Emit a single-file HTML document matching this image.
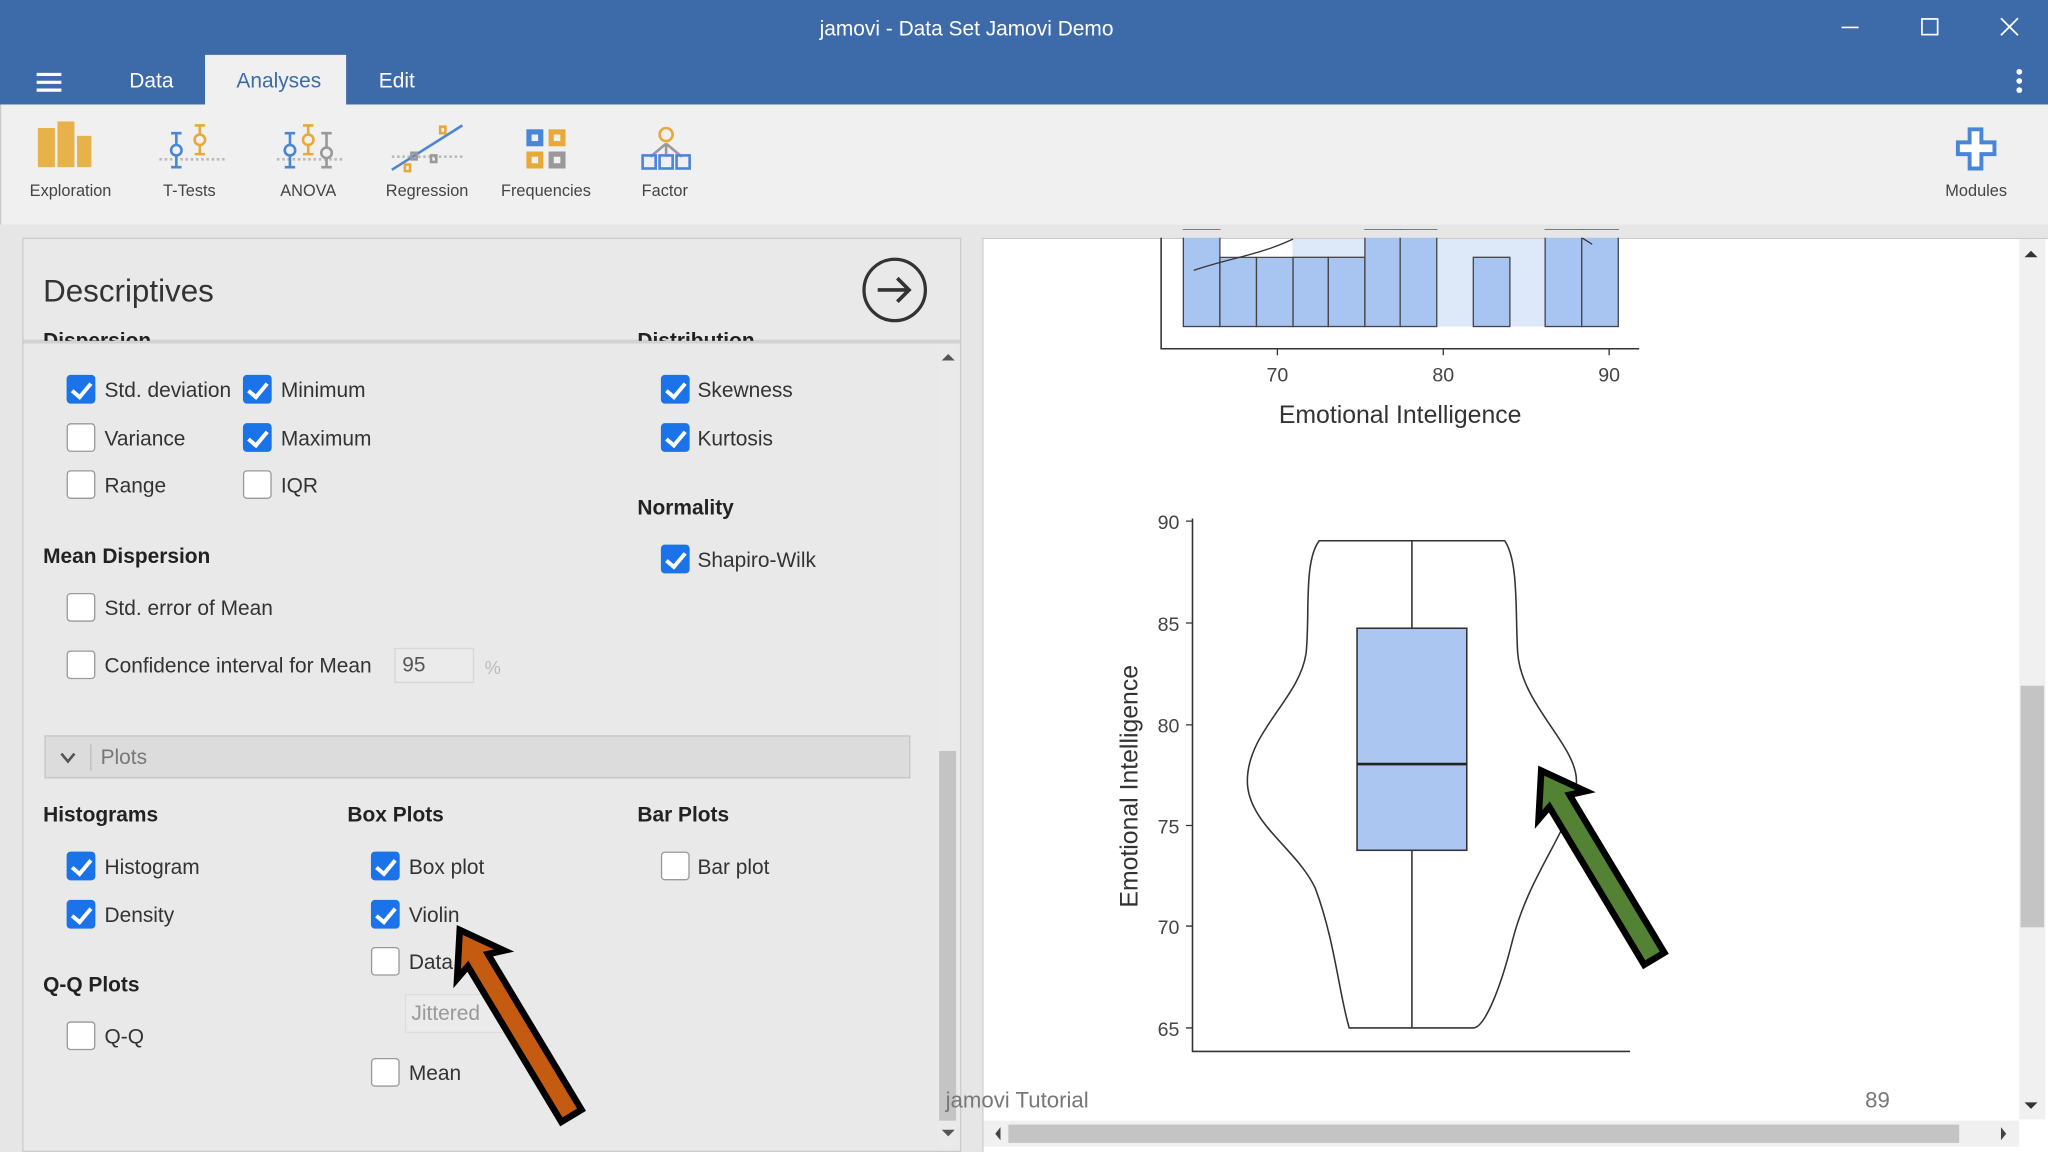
<!DOCTYPE html>
<html><head><meta charset="utf-8"><style>
*{margin:0;padding:0;box-sizing:border-box}
html,body{width:2048px;height:1152px;overflow:hidden;background:#e6e6e6}
#w{position:absolute;left:0;top:0;width:1568px;height:882px;transform:scale(1.306122);transform-origin:0 0;font-family:"Liberation Sans",sans-serif;color:#333}
.a{position:absolute}
.t{position:absolute;font-size:16px;color:#333;white-space:nowrap;line-height:1}
.h{position:absolute;font-size:16px;font-weight:bold;color:#222;white-space:nowrap;line-height:1}
.cb{position:absolute;width:22px;height:22px;border:1px solid #999;border-radius:3px;background:#fff}
.cb.on{background:#1a73e8;border-color:#1a73e8}
.cb.on::after{content:"";position:absolute;left:6px;top:2px;width:6px;height:12px;border:solid #fff;border-width:0 3px 3px 0;transform:rotate(40deg)}
.lbl{position:absolute;font-size:12.5px;color:#444;text-align:center;width:80px}
</style></head><body><div id="w">
<div class="a" style="left:0;top:0;width:1568px;height:80px;background:#3d6aa8"></div>
<div class="t" style="left:0;width:1480px;top:15px;text-align:center;color:#fff;font-size:16px">jamovi - Data Set Jamovi Demo</div>
<svg class="a" style="left:1400px;top:8px" width="160" height="28"><path d="M10 13h13" stroke="#fff" stroke-width="1.3"/><rect x="71.5" y="6.5" width="12" height="12" fill="none" stroke="#fff" stroke-width="1.3"/><path d="M132 6l13 13M145 6l-13 13" stroke="#fff" stroke-width="1.4"/></svg>
<svg class="a" style="left:28px;top:55px" width="20" height="16"><path d="M0 2h19M0 8h19M0 14h19" stroke="#fff" stroke-width="2.4"/></svg>
<div class="t" style="left:99px;top:55px;color:#fff">Data</div>
<div class="a" style="left:157px;top:42px;width:108px;height:40px;background:#f0f0f0"></div>
<div class="t" style="left:181px;top:55px;color:#3d6aa8">Analyses</div>
<div class="t" style="left:290px;top:55px;color:#fff">Edit</div>
<svg class="a" style="left:1542px;top:52px" width="8" height="20"><circle cx="4" cy="3" r="2.2" fill="#fff"/><circle cx="4" cy="10" r="2.2" fill="#fff"/><circle cx="4" cy="17" r="2.2" fill="#fff"/></svg>
<div class="a" style="left:0;top:80px;width:1568px;height:92px;background:#f0f0f0;border-left:1px solid #ccc"></div>
<svg class="a" style="left:0;top:88px" width="560" height="50">
<g fill="#e8b24a"><rect x="29" y="10" width="13" height="30"/><rect x="44" y="5" width="13" height="35"/><rect x="59" y="16" width="11" height="24"/></g>
<g stroke-width="2" fill="none"><path d="M122 34h50" stroke="#bbb" stroke-dasharray="2 2"/><path d="M135 14v26M131 14h8M131 40h8" stroke="#4a86d6"/><circle cx="135" cy="27" r="4" fill="#f0f0f0" stroke="#4a86d6"/><path d="M153 8v22M149 8h8M149 30h8" stroke="#e8a93a"/><circle cx="153" cy="19" r="4" fill="#f0f0f0" stroke="#e8a93a"/></g>
<g stroke-width="2" fill="none"><path d="M212 34h50" stroke="#bbb" stroke-dasharray="2 2"/><path d="M222 14v26M218 14h8M218 40h8" stroke="#4a86d6"/><circle cx="222" cy="27" r="4" fill="#f0f0f0" stroke="#4a86d6"/><path d="M236 8v22M232 8h8M232 30h8" stroke="#e8a93a"/><circle cx="236" cy="19" r="4" fill="#f0f0f0" stroke="#e8a93a"/><path d="M250 14v26M246 14h8M246 40h8" stroke="#999"/><circle cx="250" cy="29" r="4" fill="#f0f0f0" stroke="#999"/></g>
<g fill="none" stroke-width="2"><path d="M300 32h55" stroke="#bbb" stroke-dasharray="2 2"/><path d="M300 42L354 8" stroke="#4a86d6"/><rect x="315" y="29" width="4" height="5" stroke="#999"/><rect x="330" y="31" width="4" height="5" stroke="#999"/><rect x="337" y="9" width="4" height="5" stroke="#e8a93a"/><rect x="310" y="38" width="4" height="5" stroke="#e8a93a"/></g>
<g><rect x="403" y="11" width="13" height="13" fill="#4a86d6"/><rect x="420" y="11" width="13" height="13" fill="#e8a93a"/><rect x="403" y="28" width="13" height="13" fill="#e8a93a"/><rect x="420" y="28" width="13" height="13" fill="#999"/><rect x="407" y="15" width="5" height="5" fill="#f0f0f0"/><rect x="424" y="15" width="5" height="5" fill="#f0f0f0"/><rect x="407" y="32" width="5" height="5" fill="#f0f0f0"/><rect x="424" y="32" width="5" height="5" fill="#f0f0f0"/></g>
<g fill="none" stroke-width="2"><path d="M510 22L498 32M510 22v10M510 22l12 10" stroke="#999"/><circle cx="510" cy="15" r="5" stroke="#e8a93a" fill="#f0f0f0"/><rect x="492" y="31" width="10" height="10" stroke="#4a86d6"/><rect x="505" y="31" width="10" height="10" stroke="#4a86d6"/><rect x="518" y="31" width="10" height="10" stroke="#4a86d6"/></g>
</svg>
<div class="lbl" style="left:14px;top:139px">Exploration</div>
<div class="lbl" style="left:105px;top:139px">T-Tests</div>
<div class="lbl" style="left:196px;top:139px">ANOVA</div>
<div class="lbl" style="left:287px;top:139px">Regression</div>
<div class="lbl" style="left:378px;top:139px">Frequencies</div>
<div class="lbl" style="left:469px;top:139px">Factor</div>
<svg class="a" style="left:1497px;top:97px" width="32" height="34"><path d="M11 2h9v10h10v9H20v11h-9V21H2v-9h9z" fill="#fff" stroke="#4a86d6" stroke-width="3"/></svg>
<div class="lbl" style="left:1473px;top:139px">Modules</div>
<div class="a" style="left:17px;top:182px;width:719px;height:700px;background:#e9e9e9;border:1px solid #ccc"></div>
<div class="t" style="left:33px;top:212px;font-size:24px;color:#333">Descriptives</div>
<svg class="a" style="left:659px;top:196px" width="52" height="52"><circle cx="26" cy="26" r="23.5" fill="none" stroke="#333" stroke-width="2.5"/><path d="M13 26h24M28 17l9 9-9 9" fill="none" stroke="#333" stroke-width="2.8"/></svg>
<div class="a" style="left:18px;top:260px;width:717px;height:3px;background:#d2d2d2"></div>
<div class="h" style="left:33px;top:254px;height:7px;overflow:hidden">Dispersion</div>
<div class="h" style="left:488px;top:254px;height:7px;overflow:hidden">Distribution</div>
<div class="a" style="left:718px;top:265px;width:15px;height:612px;background:#eaeaea"></div>
<div class="a" style="left:719px;top:575px;width:13px;height:283px;background:#c4c4c4"></div>
<svg class="a" style="left:719px;top:268px" width="14" height="606"><path d="M2 8l5-5 5 5z M2 597l5 5 5-5z" fill="#555"/></svg>
<div class="cb on" style="left:51px;top:287px"></div><div class="t" style="left:80px;top:292px">Std. deviation</div>
<div class="cb on" style="left:186px;top:287px"></div><div class="t" style="left:215px;top:292px">Minimum</div>
<div class="cb" style="left:51px;top:324px"></div><div class="t" style="left:80px;top:329px">Variance</div>
<div class="cb on" style="left:186px;top:324px"></div><div class="t" style="left:215px;top:329px">Maximum</div>
<div class="cb" style="left:51px;top:360px"></div><div class="t" style="left:80px;top:365px">Range</div>
<div class="cb" style="left:186px;top:360px"></div><div class="t" style="left:215px;top:365px">IQR</div>
<div class="cb on" style="left:506px;top:287px"></div><div class="t" style="left:534px;top:292px">Skewness</div>
<div class="cb on" style="left:506px;top:324px"></div><div class="t" style="left:534px;top:329px">Kurtosis</div>
<div class="h" style="left:488px;top:382px">Normality</div>
<div class="cb on" style="left:506px;top:417px"></div><div class="t" style="left:534px;top:422px">Shapiro-Wilk</div>
<div class="h" style="left:33px;top:419px">Mean Dispersion</div>
<div class="cb" style="left:51px;top:454px"></div><div class="t" style="left:80px;top:459px">Std. error of Mean</div>
<div class="cb" style="left:51px;top:498px"></div><div class="t" style="left:80px;top:503px">Confidence interval for Mean</div>
<div class="a" style="left:302px;top:496px;width:61px;height:27px;background:#ebebeb;border:1px solid #d6d6d6"></div>
<div class="t" style="left:308px;top:502px;color:#555">95</div>
<div class="t" style="left:371px;top:504px;color:#bbb;font-size:14px">%</div>
<div class="a" style="left:34px;top:563px;width:663px;height:33px;background:#dcdcdc;border:1px solid #c6c6c6"></div>
<svg class="a" style="left:45px;top:574px" width="14" height="12"><path d="M2 3l5 6 5-6" fill="none" stroke="#555" stroke-width="2"/></svg>
<div class="a" style="left:69px;top:570px;width:1px;height:20px;background:#bbb"></div>
<div class="t" style="left:77px;top:573px;color:#777">Plots</div>
<div class="h" style="left:33px;top:617px">Histograms</div>
<div class="h" style="left:266px;top:617px">Box Plots</div>
<div class="h" style="left:488px;top:617px">Bar Plots</div>
<div class="cb on" style="left:51px;top:652px"></div><div class="t" style="left:80px;top:657px">Histogram</div>
<div class="cb on" style="left:51px;top:689px"></div><div class="t" style="left:80px;top:694px">Density</div>
<div class="h" style="left:33px;top:747px">Q-Q Plots</div>
<div class="cb" style="left:51px;top:782px"></div><div class="t" style="left:80px;top:787px">Q-Q</div>
<div class="cb on" style="left:284px;top:652px"></div><div class="t" style="left:313px;top:657px">Box plot</div>
<div class="cb on" style="left:284px;top:689px"></div><div class="t" style="left:313px;top:694px">Violin</div>
<div class="cb" style="left:284px;top:725px"></div><div class="t" style="left:313px;top:730px">Data</div>
<div class="a" style="left:310px;top:761px;width:80px;height:30px;background:#ebebeb;border:1px solid #ddd"></div>
<div class="t" style="left:315px;top:769px;color:#999">Jittered</div>
<div class="cb" style="left:284px;top:810px"></div><div class="t" style="left:313px;top:815px">Mean</div>
<div class="cb" style="left:506px;top:652px"></div><div class="t" style="left:534px;top:657px">Bar plot</div>
<div class="a" style="left:752px;top:182px;width:816px;height:700px;background:#fff;border-left:1px solid #ccc;border-top:1px solid #ccc"></div>
<svg class="a" style="left:0;top:0" width="1568" height="882" font-family="Liberation Sans, sans-serif">
<rect x="906" y="183" width="333" height="67" fill="#dde8f8"/>
<g fill="#a8c4f0" stroke="#444" stroke-width="1">
<rect x="906" y="176" width="28" height="74"/><rect x="934" y="197" width="28" height="53"/><rect x="962" y="197" width="28" height="53"/><rect x="990" y="197" width="27" height="53"/><rect x="1017" y="197" width="28" height="53"/><rect x="1045" y="176" width="27" height="74"/><rect x="1072" y="176" width="28" height="74"/><rect x="1128" y="197" width="28" height="53"/><rect x="1183" y="176" width="28" height="74"/><rect x="1211" y="176" width="28" height="74"/></g>
<rect x="934.5" y="183" width="55" height="13.5" fill="#fff"/>
<path d="M914 207C940 198 965 195 990 183" fill="none" stroke="#333" stroke-width="1"/>
<path d="M1211 182l8 5" stroke="#333" stroke-width="1"/>
<rect x="753" y="176" width="800" height="6" fill="#e6e6e6"/>
<path d="M889 182v85h366" fill="none" stroke="#333" stroke-width="1.2"/>
<path d="M978 267v5M1105 267v5M1232 267v5" stroke="#333"/>
<g font-size="15" fill="#444" text-anchor="middle"><text x="978" y="292">70</text><text x="1105" y="292">80</text><text x="1232" y="292">90</text></g>
<text x="1072" y="324" font-size="19" fill="#333" text-anchor="middle">Emotional Intelligence</text>
<path d="M913 397v408h335" fill="none" stroke="#333" stroke-width="1.2"/>
<g stroke="#333"><path d="M908 399h5M908 477h5M908 555h5M908 632h5M908 709h5M908 787h5"/></g>
<g font-size="15" fill="#444" text-anchor="end"><text x="903" y="405">90</text><text x="903" y="483">85</text><text x="903" y="561">80</text><text x="903" y="638">75</text><text x="903" y="715">70</text><text x="903" y="793">65</text></g>
<text transform="translate(871,602) rotate(-90)" font-size="19" fill="#333" text-anchor="middle">Emotional Intelligence</text>
<path d="M1010 414L1152 414C1163 430 1160 470 1162 500C1165 540 1207 570 1207 598C1207 630 1172 665 1158 720C1148 760 1136 787 1128 787L1033 787C1025 760 1022 720 1007 680C993 650 955 630 955 598C955 560 995 535 1000 500C1003 470 998 430 1010 414Z" fill="#fff" stroke="#333" stroke-width="1.2"/>
<path d="M1081 414v373" stroke="#333" stroke-width="1.2"/>
<rect x="1039" y="481" width="84" height="170" fill="#abc6f0" stroke="#333" stroke-width="1.2"/>
<path d="M1039 585h84" stroke="#222" stroke-width="2"/>
<g transform="translate(1180,590) rotate(-31)"><path d="M0 0L21 31L9 27L9 168L-9 168L-9 27L-21 31Z" fill="#548235" stroke="#000" stroke-width="5"/></g>
<text x="724" y="848" font-size="17" fill="#777">jamovi Tutorial</text>
<text x="1428" y="848" font-size="17" fill="#777">89</text>
<rect x="1546" y="183" width="20" height="674" fill="#f0f0f0"/>
<rect x="1547" y="525" width="18" height="185" fill="#c4c4c4"/>
<path d="M1550 197l5-5 5 5zM1550 844l5 5 5-5z" fill="#333"/>
<rect x="753" y="858" width="793" height="20" fill="#f0f0f0"/>
<rect x="772" y="861" width="728" height="14" fill="#c4c4c4"/>
<path d="M766 863l-4 5 4 5zM1532 863l4 5-4 5z" fill="#444"/>
<g transform="translate(352,712) rotate(-31)"><path d="M0 0L21 31L9 27L9 166L-9 166L-9 27L-21 31Z" fill="#c55a11" stroke="#000" stroke-width="5"/></g>
</svg>
</div></body></html>
